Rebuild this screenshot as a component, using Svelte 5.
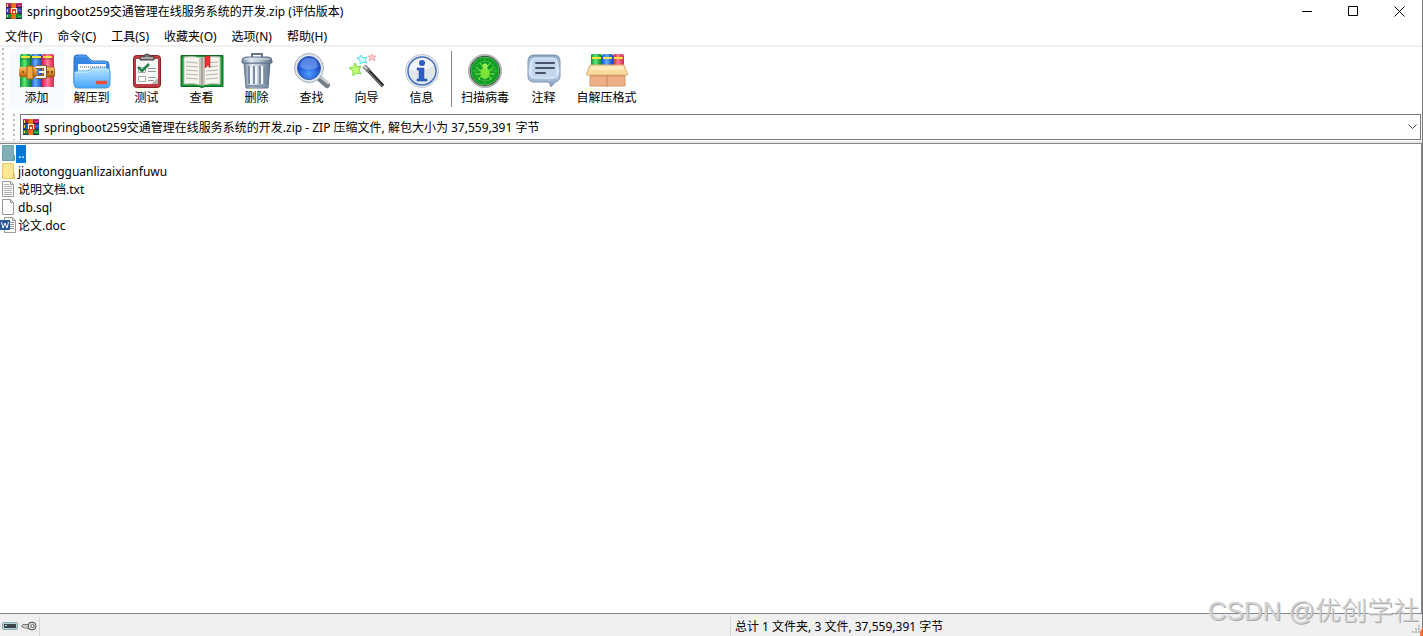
<script>
    const archive = "springboot259交通管理在线服务系统的开发.zip";
    const location = `${archive} - ZIP 压缩文件, 解包大小为 37,559,391 字节`;

    const menus = ["文件(F)", "命令(C)", "工具(S)", "收藏夹(O)", "选项(N)", "帮助(H)"];

    const tools = [
        { id: "add", label: "添加" },
        { id: "extract", label: "解压到" },
        { id: "test", label: "测试" },
        { id: "view", label: "查看" },
        { id: "delete", label: "删除" },
        { id: "find", label: "查找" },
        { id: "wizard", label: "向导" },
        { id: "info", label: "信息" },
    ];

    const extraTools = [
        { id: "scan", label: "扫描病毒" },
        { id: "comment", label: "注释" },
        { id: "sfx", label: "自解压格式" },
    ];

    const files = [
        { name: "..", type: "up" },
        { name: "jiaotongguanlizaixianfuwu", type: "folder" },
        { name: "说明文档.txt", type: "text" },
        { name: "db.sql", type: "file" },
        { name: "论文.doc", type: "word" },
    ];

    let selected = $state("..");
</script>

{#snippet logo()}
    <svg class="logo" width="16" height="16" viewBox="0 0 16 16" aria-hidden="true">
        <rect y="0" width="16" height="5" fill="#a3215b" />
        <rect y="5" width="16" height="6" fill="#2f49ae" />
        <rect y="11" width="16" height="5" fill="#188a3c" />
        <path d="M0 0h16v1H0z" fill="#b8386c" />
        <path d="M0 4h16v1H0zM0 10h16v1H0zM0 15h16v1H0z" fill="#2a2a50" />
        <path d="M1 1h1v3H1zM1 6h1v3H1zM1 12h1v2H1z" fill="#ffd33d" />
        <path d="M12 2.500h3" stroke="#cf5f92" /><path d="M12 7.500h3" stroke="#5f7fe0" /><path d="M12 13.500h3" stroke="#4fc070" />
        <rect x="5" width="5" height="16" fill="#e8741c" />
        <path d="M5 0h1v16H5z" fill="#c2551a" />
        <rect x="4" y="5" width="8" height="6" fill="#c8401c" />
        <path d="M5 5h1v5H5zM10 5h1v5h-1zM6 5h4v1H6zM7 8h2v2H7z" fill="#fff4df" />
    </svg>
{/snippet}

{#snippet toolIcon(id)}
    {#if id === "add"}
        <svg width="36" height="36" viewBox="0 0 36 36" aria-hidden="true">
            <defs>
                <linearGradient id="gBook"><stop stop-color="#0c8f2e" /><stop offset=".4" stop-color="#5be878" /><stop offset="1" stop-color="#0a7e2a" /></linearGradient>
                <linearGradient id="bBook"><stop stop-color="#1a52c8" /><stop offset=".4" stop-color="#62aeff" /><stop offset="1" stop-color="#1747b5" /></linearGradient>
                <linearGradient id="rBook"><stop stop-color="#d01c40" /><stop offset=".45" stop-color="#ff8094" /><stop offset="1" stop-color="#d4264c" /></linearGradient>
                <linearGradient id="belt" x2="0" y2="1"><stop stop-color="#f9c46c" /><stop offset=".5" stop-color="#e39430" /><stop offset="1" stop-color="#a65a10" /></linearGradient>
            </defs>
            <path d="M1 3q0-2 2-2h8q1 0 1 2v31H1z" fill="url(#gBook)" />
            <path d="M12 3q0-2 2-2h8q1 0 1 2v31H12z" fill="url(#bBook)" />
            <path d="M23 3q0-2 2-2h8q2 0 2 2v31H23z" fill="url(#rBook)" />
            <path d="M2 4h9M13 4h9M24 4h9" stroke="#ffe338" stroke-width="2" />
            <path d="M2 6h9M13 6h9M24 6h9" stroke="#173f2f" stroke-opacity=".5" />
            <path d="M0 15q2-2 4-1h14v10H4q-2 1-4-1z" fill="url(#belt)" />
            <path d="M23 14h12l1 2v6l-1 2H23z" fill="url(#belt)" stroke="#9b4d10" stroke-width=".7" />
            <path d="M8 13h6v13H8z" fill="#f0a942" stroke="#a0601a" />
            <path d="M17 14h9v10h-9" fill="none" stroke="#8a5a30" stroke-width="4" />
            <path d="M17 14h9v10h-9M20 19h6" fill="none" stroke="#f6f0e4" stroke-width="2" />
            <circle cx="4" cy="19" r="1" fill="#7b4516" /><circle cx="29" cy="19" r="1" fill="#5e3214" /><circle cx="33" cy="19" r="1" fill="#5e3214" />
        </svg>
    {:else if id === "extract"}
        <svg width="38" height="36" viewBox="0 0 38 36" aria-hidden="true">
            <defs><linearGradient id="folderFront" x2="0" y2="1"><stop stop-color="#b4e2ff" /><stop offset=".5" stop-color="#80c6ff" /><stop offset="1" stop-color="#46a4fb" /></linearGradient></defs>
            <path d="M1 30V5q0-3 3-3h8q2 0 4 3t4 3h12q4 0 4 4v18z" fill="#3585e2" stroke="#2a6fca" />
            <path d="M3 5q1-2 3-2h6q2 0 4 3t4 3h12q2 0 2 2" fill="none" stroke="#67adf2" />
            <path d="M5 11h28v11H5z" fill="#f8fbff" />
            <path d="M7 14h25" stroke="#a5adb9" stroke-width="2" stroke-dasharray="1 1" />
            <path d="M1 20q0-2 3-2h10q2 0 4-2t4-1h11q4 0 4 3v13q0 4-4 4H5q-4 0-4-4z" fill="url(#folderFront)" stroke="#4398e4" />
            <path d="M2 20q1-1 3-1h9q2 0 4-2t4-1h10q3 0 4 2" fill="none" stroke="#d8f4ff" />
            <rect x="23" y="28" width="11" height="3" rx="1" fill="#ee5136" stroke="#c65142" stroke-width=".5" />
        </svg>
    {:else if id === "test"}
        <svg width="30" height="36" viewBox="0 0 30 36" aria-hidden="true">
            <rect x="1.500" y="2.500" width="27" height="32" rx="3" fill="#bd3a42" stroke="#8b2228" />
            <path d="M4 6h22v25H4z" fill="#f8f8f8" />
            <path d="M26 25v6h-7z" fill="#b8b8b8" />
            <path d="M8 7V4h4q0-3 3-3t3 3h4v3z" fill="#777" stroke="#444" /><path d="M9 5h12" stroke="#ddd" />
            <path d="M6.500 14.500h7v5h-7zM6.500 23.500h7v5h-7z" fill="#fff" stroke="#aaa" />
            <path d="M16 15.500h8M16 18.500h8M16 24.500h8M16 27.500h6" stroke="#999" />
            <path d="M6 14l4 4 7-7" fill="none" stroke="#23804a" stroke-width="2.500" />
        </svg>
    {:else if id === "view"}
        <svg width="44" height="36" viewBox="0 0 44 36" aria-hidden="true">
            <path d="M1 2.500h42v31H25l-3 1-3-1H1z" fill="#189836" stroke="#0b6b20" />
            <path d="M4 4q10-1 18 1v27q-8-2-18-1zM40 4q-10-1-18 1v27q8-2 18-1z" fill="#f5f4ee" stroke="#c3c3b8" />
            <path d="M19 4q3 0 3 2v26l-3-1zM25 4q-3 0-3 2v26l3-1z" fill="#c8c4ba" />
            <path d="M22 5v27" stroke="#88867e" />
            <path d="M6 9l12 1M6 13l12 1M6 17l12 1M6 21l12 1M6 25l12 1M38 9l-12 1M38 13l-12 1M38 17l-12 1M38 21l-12 1M38 25l-12 1" stroke="#b5b5b0" />
            <path d="M25 3h5v12l-2-3-3 3z" fill="#e43131" stroke="#af2020" stroke-width=".5" />
        </svg>
    {:else if id === "delete"}
        <svg width="32" height="36" viewBox="0 0 32 36" aria-hidden="true">
            <defs><linearGradient id="bin"><stop stop-color="#74859a" /><stop offset=".3" stop-color="#e4ebf1" /><stop offset=".6" stop-color="#b4c1cf" /><stop offset="1" stop-color="#5d7088" /></linearGradient></defs>
            <path d="M11 4V1h10v3" fill="none" stroke="#66788b" stroke-width="2" />
            <path d="M3 10h26l-2 25H5z" fill="url(#bin)" stroke="#60738a" />
            <path d="M8 13v18M13 13v18M19 13v18M24 13v18" stroke="#7b8da3" stroke-width="2" />
            <path d="M10 13v18M15 13v18M21 13v18" stroke="#f3f8fc" stroke-width="2" />
            <path d="M1 8q0-4 4-4h22q4 0 4 4v2H1z" fill="url(#bin)" stroke="#60738a" /><path d="M3 6h26" stroke="#dde6ee" />
            <path d="M5 33h22" stroke="#8495a9" stroke-width="2" />
        </svg>
    {:else if id === "find"}
        <svg width="38" height="36" viewBox="0 0 38 36" aria-hidden="true">
            <defs><radialGradient id="lens" cy=".75"><stop stop-color="#4f9cff" /><stop offset="1" stop-color="#1c4fce" /></radialGradient></defs>
            <path d="M25 24l9 8" stroke="#747c86" stroke-width="6" stroke-linecap="round" /><path d="M26 23l10 8" stroke="#ccd2d8" stroke-width="2" />
            <circle cx="16" cy="15" r="14.500" fill="#e1e6ec" stroke="#a3adb8" />
            <circle cx="16" cy="15" r="11.500" fill="url(#lens)" stroke="#3a5faf" />
            <path d="M7 14q0-9 9-9t9 9q-9 5-18 0z" fill="#8db2f4" opacity=".55" />
        </svg>
    {:else if id === "wizard"}
        <svg width="36" height="36" viewBox="0 0 36 36" aria-hidden="true">
            <path d="M17 15l17 18" stroke="#2d2d2d" stroke-width="3.500" /><path d="M16 15l17 18" stroke="#999" />
            <path d="M15 13l5 5" stroke="#777" stroke-width="4.500" /><path d="M15 13l3 3" stroke="#ccc" stroke-width="2" />
            <path d="M6 10l2 4 4-1-2 4 2 4-5-1-3 3v-5l-4-3 5-1z" fill="#c4fb75" stroke="#7bdb40" />
            <path d="M12 2l2 3 4-1-2 3 2 3-4-1-3 2v-4L8 5l3-1z" fill="#d7fcff" stroke="#52dcf0" />
            <path d="M23 1l1 2h3l-2 2 1 3-3-2-3 2 1-3-2-2h3z" fill="#ffc9c9" stroke="#f5a0a0" stroke-width=".8" />
        </svg>
    {:else if id === "info"}
        <svg width="36" height="36" viewBox="0 0 36 36" aria-hidden="true">
            <circle cx="18" cy="18" r="16.500" fill="#e6e9ed" stroke="#c3cad2" />
            <circle cx="18" cy="18" r="14" fill="#e0e4eb" stroke="#4470bd" stroke-width="1.500" />
            <path d="M5 17q3-12 14-12 9 1 11 8-10 6-25 4z" fill="#fff" opacity=".6" />
            <circle cx="18" cy="10" r="3" fill="#2b5cc8" /><path d="M13 15h7v11h3v2H13v-2h2v-9h-2z" fill="#2b5cc8" stroke="#1e479f" stroke-width=".5" />
        </svg>
    {:else if id === "scan"}
        <svg width="36" height="36" viewBox="0 0 36 36" aria-hidden="true">
            <circle cx="18" cy="18" r="16" fill="#263128" stroke="#b0b4b4" stroke-width="2" />
            <circle cx="18" cy="18" r="14" fill="#119d25" stroke="#6bd96f" stroke-width=".7" />
            <circle cx="18" cy="18" r="10" fill="none" stroke="#39bb3e" /><path d="M18 4v28M4 18h28" stroke="#32b43b" />
            <path d="M13 10l3 4M23 10l-3 4M10 14l2 3 3 1M26 14l-2 3-3 1M9 21h5M27 21h-5M12 27l1-3 3-1M24 27l-1-3-3-1" fill="none" stroke="#8bec45" />
            <ellipse cx="18" cy="20" rx="4.500" ry="6" fill="#7fe43a" /><circle cx="18" cy="13" r="2.500" fill="#9aee51" />
        </svg>
    {:else if id === "comment"}
        <svg width="34" height="36" viewBox="0 0 34 36" aria-hidden="true">
            <defs><linearGradient id="bubble" x2="0" y2="1"><stop stop-color="#86a3c4" /><stop offset=".5" stop-color="#d7e6f5" /><stop offset="1" stop-color="#7f9bc0" /></linearGradient></defs>
            <path d="M7 2h20q6 0 6 6v15q0 5-5 6l-4 5-2-5H7q-6 0-6-6V8q0-6 6-6z" fill="url(#bubble)" stroke="#7d94b4" />
            <rect x="4" y="5" width="26" height="20" rx="4" fill="#c3d6eb" stroke="#e5f3ff" />
            <path d="M9 10h18M9 15h18M9 20h9" stroke="#485369" stroke-width="2" stroke-linecap="round" />
        </svg>
    {:else if id === "sfx"}
        <svg width="42" height="36" viewBox="0 0 42 36" aria-hidden="true">
            <path d="M5 2q0-1 2-1h7q2 0 2 2v12H5z" fill="url(#gBook)" /><path d="M16 3q0-2 2-2h7q2 0 2 2v12H16z" fill="url(#bBook)" /><path d="M27 3q0-2 2-2h7q2 0 2 2v12H27z" fill="url(#rBook)" />
            <path d="M6 5h9M17 5h9M28 5h9" stroke="#ffe338" stroke-width="2" />
            <path d="M4 20h35v13H4z" fill="#efb088" stroke="#d6966c" />
            <path d="M4 12h34l4 10H0z" fill="#fadb9e" stroke="#deb077" /><path d="M5 13h32l1 4H4z" fill="#ffebbb" />
            <path d="M21 22v12" stroke="#c98a62" /><path d="M4 23h35" stroke="#ba784d" opacity=".6" />
        </svg>
    {/if}
{/snippet}

{#snippet fileIcon(type)}
    <svg width="16" height="16" viewBox="0 0 16 16" aria-hidden="true">
        {#if type === "up" || type === "folder"}
            <path d="M2.500.5h11v9l1 1v5h-12z" fill={type === "up" ? "#7fb0b5" : "#ffe694"} stroke={type === "up" ? "#6aa3ae" : "#ecc964"} />
            <path d="M13.500 9v6h-2" fill="none" stroke={type === "up" ? "#5d9dab" : "#e8bd50"} />
        {:else if type === "text"}
            <path d="M2.500.5h8l3 3v12h-11z" fill="#fff" stroke="#999" /><path d="M10.500.5v3h3" fill="none" stroke="#999" />
            <path d="M4 3.500h5M4 5.500h8M4 7.500h8M4 9.500h8M4 11.500h8M4 13.500h8" stroke="#b0b0b0" />
        {:else if type === "file"}
            <path d="M2.500.5h8l3 3v12h-11z" fill="#fafafa" stroke="#999" /><path d="M10.500.5v3h3" fill="none" stroke="#999" />
        {:else}
            <path d="M4.500.5h8l3 3v12h-11z" fill="#fff" stroke="#999" /><path d="M12.500.5v3h3M10 5.500h4M10 7.500h4M10 9.500h4M10 11.500h4" fill="none" stroke="#999" />
            <rect y="3" width="10" height="10" fill="#2b579a" /><path d="M1.500 5l1.500 6 2-5 2 5 1.500-6" fill="none" stroke="#fff" />
        {/if}
    </svg>
{/snippet}

<div class="window">
    <header class="titlebar">
        {@render logo()}
        <h1>{archive} (评估版本)</h1>
        <div class="controls">
            <button aria-label="最小化"><svg width="11" height="11" viewBox="0 0 11 11"><path d="M0 5.500h10" /></svg></button>
            <button aria-label="最大化"><svg width="11" height="11" viewBox="0 0 11 11"><path d="M.5.500h9v9h-9z" /></svg></button>
            <button aria-label="关闭"><svg width="11" height="11" viewBox="0 0 11 11"><path d="M.5.500l10 10M10.500.5l-10 10" /></svg></button>
        </div>
    </header>

    <nav class="menu">
        {#each menus as item}
            <button>{item}</button>
        {/each}
    </nav>

    <div class="bars">
        <div class="grip"></div>
        <div class="bar-stack">
            <div class="toolbar">
                {#each tools as tool}
                    <button class:hot={tool.id === "add"}>{@render toolIcon(tool.id)}<span>{tool.label}</span></button>
                {/each}
                <div class="separator"></div>
                {#each extraTools as tool}
                    <button class={tool.id}>{@render toolIcon(tool.id)}<span>{tool.label}</span></button>
                {/each}
            </div>
            <div class="address">
                <div class="grip"></div>
                <div class="combo">
                    {@render logo()}
                    <select aria-label="位置">
                        <option>{location}</option>
                    </select>
                    <svg class="chevron" width="9" height="6" viewBox="0 0 9 6" aria-hidden="true"><path d="M.5.500l4 4 4-4" /></svg>
                </div>
            </div>
        </div>
    </div>

    <main>
        <ul>
            {#each files as file}
                <li>
                    <button class:selected={selected === file.name} onclick={() => (selected = file.name)}>
                        {@render fileIcon(file.type)}<span>{file.name}</span>
                    </button>
                </li>
            {/each}
        </ul>
    </main>

    <footer>
        <div class="status-icons">
            <svg width="16" height="8" viewBox="0 0 16 8" aria-hidden="true"><rect x=".5" y=".5" width="15" height="7" rx="1" fill="#b4d2da" stroke="#8ba6af" /><rect x="2" y="2" width="12" height="4" fill="#3a464c" /><path d="M3 3.500h2" stroke="#cde" /></svg>
            <svg width="16" height="10" viewBox="0 0 16 10" aria-hidden="true"><path d="M8 3.500H2L.5 5.500l1.500 1h1l1 1 1-1 1 1h2" fill="#ccc" stroke="#777" /><circle cx="11" cy="5" r="4" fill="#d5d5d5" stroke="#555" /><circle cx="11.500" cy="5" r="1.500" fill="#fff" stroke="#666" /></svg>
        </div>
        <div class="total">总计 1 文件夹, 3 文件, 37,559,391 字节</div>
        <svg class="resize" width="11" height="11" viewBox="0 0 11 11" aria-hidden="true">
            <path d="M6 0h2v2H6zM3 3h2v2H3zM6 3h2v2H6zM0 6h2v2H0zM3 6h2v2H3zM6 6h2v2H6z" fill="#bcbcbc" />
            <path d="M11 2v9H8q1-2 0-4z" fill="#ff6428" />
        </svg>
        <div class="watermark">CSDN @优创学社</div>
    </footer>
</div>

<style>
    :global(body) {
        margin: 0;
    }

    .window {
        box-sizing: border-box;
        display: flex;
        flex-direction: column;
        min-height: 100vh;
        border-right: 1px solid #777;
        background: #fff;
        color: #000;
        font-family: "Noto Sans", "Noto Sans CJK SC", sans-serif;
        font-size: 12px;
        line-height: 18px;
    }

    button,
    select {
        margin: 0;
        padding: 0;
        border: 0;
        background: none;
        color: inherit;
        font: inherit;
    }

    svg {
        flex: none;
        display: block;
    }

    .titlebar {
        display: flex;
        align-items: center;
        height: 24px;
        padding-left: 6px;
        gap: 5px;
    }

    .titlebar .logo {
        margin-bottom: 2px;
    }

    h1 {
        flex: 1;
        margin: 0;
        font-size: 12px;
        font-weight: normal;
    }

    .controls {
        display: flex;
        align-self: flex-start;
    }

    .controls button {
        display: flex;
        align-items: center;
        justify-content: center;
        width: 46px;
        height: 22px;
    }

    .controls path {
        fill: none;
        stroke: #000;
    }

    .menu {
        display: flex;
        align-items: center;
        box-sizing: border-box;
        height: 23px;
        padding: 4px 5px 0;
        gap: 15px;
        border-bottom: 2px solid #f0f0f0;
    }

    .bars {
        display: flex;
        padding: 1px 1px 0 2px;
    }

    .bar-stack {
        flex: 1;
        min-width: 0;
    }

    .grip {
        width: 2px;
        background: repeating-linear-gradient(#bbb 0 2px, #fff 2px 5px);
    }

    .toolbar {
        display: flex;
        height: 60px;
        padding: 1px 0 0 5px;
    }

    .toolbar button {
        display: flex;
        flex-direction: column;
        align-items: center;
        width: 55px;
        padding-top: 4px;
    }

    .toolbar .hot {
        background: #f7fbff;
    }

    .toolbar .scan {
        width: 62px;
    }

    .toolbar .sfx {
        width: 71px;
    }

    .separator {
        width: 1px;
        margin: 2px 2px;
        background: #888;
    }

    .address {
        display: flex;
        gap: 5px;
        padding: 5px 0 1px 9px;
    }

    .combo {
        display: flex;
        flex: 1;
        align-items: center;
        box-sizing: border-box;
        height: 26px;
        padding: 0 3px 0 2px;
        border: 1px solid #777;
        gap: 5px;
    }

    select {
        flex: 1;
        appearance: none;
        height: 24px;
        padding-top: 1px;
    }

    .chevron path {
        fill: none;
        stroke: #444;
    }

    main {
        flex: 1;
        margin-top: 2px;
        border-top: 1px solid #828790;
        border-right: 1px solid #828790;
        border-bottom: 1px solid #828790;
        box-shadow: 0 -2px #e8e8e8;
    }

    ul {
        margin: 1px 0 0;
        padding: 0;
        list-style: none;
    }

    li button {
        display: flex;
        align-items: center;
        height: 18px;
    }

    li svg {
        margin-bottom: 2px;
    }

    li span {
        padding: 0 2px;
    }

    .selected span {
        background: #0078d7;
        color: #fff;
    }

    footer {
        position: relative;
        display: grid;
        grid-template-columns: 730px 1fr;
        height: 22px;
        background: #f0f0f0;
        align-items: end;
    }

    .status-icons {
        display: flex;
        align-items: center;
        gap: 3px;
        box-sizing: border-box;
        width: 40px;
        height: 19px;
        padding: 0 0 1px 2px;
        border-right: 1px solid #d5d5d5;
    }

    .total {
        box-sizing: border-box;
        height: 19px;
        padding: 1px 0 0 4px;
        border-left: 1px solid #d5d5d5;
    }

    .resize {
        position: absolute;
        right: -1px;
        bottom: 0;
    }

    .watermark {
        position: absolute;
        right: 3px;
        bottom: 6px;
        color: #d2d2d2;
        font-family: "Liberation Sans", "Noto Sans CJK SC", sans-serif;
        font-size: 26px;
        font-weight: 300;
        line-height: 38px;
        text-shadow: 1px 1px #aaa;
        pointer-events: none;
    }
</style>
